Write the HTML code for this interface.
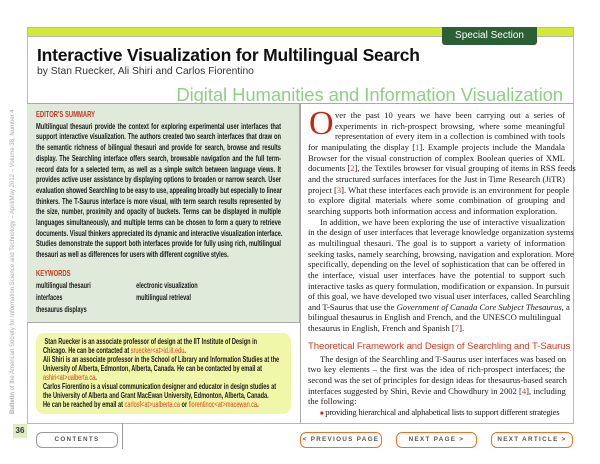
<!DOCTYPE html>
<html><head><meta charset="utf-8"><style>
*{margin:0;padding:0;box-sizing:border-box}
body{width:600px;height:464px;background:#fff;position:relative;overflow:hidden;font-family:"Liberation Sans",sans-serif}
.abs{position:absolute}
.frame{left:27px;top:27px;width:547px;height:397px;border:1px solid #b8b8b8}
.bar{left:27px;top:27px;width:547px;height:10px;background:#d4e836;border:1px solid #b8b8b8}
.tab{left:442px;top:27px;width:95px;height:18px;background:#2b6035;color:#fff;font-size:10px;text-align:center;line-height:17px;border-radius:0 0 3px 3px}
.title{left:37px;top:45px;font-size:17.5px;font-weight:bold;color:#111;letter-spacing:-0.2px}
.by{left:37px;top:66px;font-size:10.3px;color:#333}
.dh{right:37px;top:84px;font-size:18.5px;color:#8fcf85;letter-spacing:-0.1px}
.hl{left:27px;top:103px;width:547px;height:1px;background:#aaa}
.panel{left:27px;top:103px;width:273px;height:220px;background:#dfeadb;border-right:1px solid #aaa;border-bottom:1px solid #aaa}
.vdiv{left:300px;top:103px;width:1px;height:321px;background:#aaa}
.sq{transform-origin:0 0;transform:scaleX(0.7);white-space:nowrap}
.sum{left:36px;top:109px;width:350px;font-size:8.2px;line-height:10.7px;color:#1a1a1a;font-weight:bold}
.sum div{text-align:justify;text-align-last:justify}
.red{color:#c8371f}
.lab{font-size:8.4px;font-weight:bold}
.kw{font-size:8px;color:#1a1a1a;line-height:12px;font-weight:bold}
.bio{left:36px;top:333px;width:255px;height:81px;background:#f1f7a8;border-radius:8px}
.biot{left:43px;top:338px;width:352px;font-size:8px;line-height:8.7px;color:#1a1a1a;font-weight:bold}
.biot .r{color:#e2401e;font-weight:normal}
.col{left:308px;top:110px;width:257px;font-family:"Liberation Serif",serif;font-size:8.6px;line-height:10.65px;color:#1a1a1a}
.col div{text-align:justify;text-align-last:justify;white-space:nowrap}
.col .nl{text-align-last:left}
.col .r{color:#d83a2a}
.drop{left:309px;top:107px;font-family:"Liberation Serif",serif;font-size:34px;color:#c8250f;line-height:34px}
.h2{left:308px;top:341px;font-size:9.6px;color:#d43a1f;white-space:nowrap;letter-spacing:-0.1px}
.vt{left:10px;top:414px;transform-origin:0 0;transform:rotate(-90deg);font-size:6px;color:#aaa;white-space:nowrap;width:310px}
.pn{left:13px;top:424px;width:14px;height:14px;background:#e0ecbf;font-size:8px;font-weight:bold;text-align:center;line-height:14px;color:#333}
.vl{left:122px;top:423px;width:1px;height:26px;background:#999}
.btn{height:16px;border-radius:6px;font-size:6.3px;font-weight:bold;letter-spacing:1.3px;text-align:center;line-height:13px;color:#555;white-space:nowrap}
.g{border:1.5px solid #999}
.o{border:1.5px solid #f07020}
</style></head><body>
<div class="abs frame"></div>
<div class="abs bar"></div>
<div class="abs tab">Special Section</div>
<div class="abs title">Interactive Visualization for Multilingual Search</div>
<div class="abs by">by Stan Ruecker, Ali Shiri and Carlos Fiorentino</div>
<div class="abs dh">Digital Humanities and Information Visualization</div>
<div class="abs panel"></div>
<div class="abs hl"></div>
<div class="abs vdiv"></div>
<div class="abs sum sq">
<div class="red lab" style="text-align-last:left;margin-bottom:2px">EDITOR'S SUMMARY</div>
<div>Multilingual thesauri provide the context for exploring experimental user interfaces that</div>
<div>support interactive visualization. The authors created two search interfaces that draw on</div>
<div>the semantic richness of bilingual thesauri and provide for search, browse and results</div>
<div>display. The Searchling interface offers search, browsable navigation and the full term-</div>
<div>record data for a selected term, as well as a simple switch between language views. It</div>
<div>provides active user assistance by displaying options to broaden or narrow search. User</div>
<div>evaluation showed Searchling to be easy to use, appealing broadly but especially to linear</div>
<div>thinkers. The T-Saurus interface is more visual, with term search results represented by</div>
<div>the size, number, proximity and opacity of buckets. Terms can be displayed in multiple</div>
<div>languages simultaneously, and multiple terms can be chosen to form a query to retrieve</div>
<div>documents. Visual thinkers appreciated its dynamic and interactive visualization interface.</div>
<div>Studies demonstrate the support both interfaces provide for fully using rich, multilingual</div>
<div style="text-align-last:left">thesauri as well as differences for users with different cognitive styles.</div>
<div class="red lab" style="text-align-last:left;margin-top:7px;margin-bottom:1px">KEYWORDS</div>
<div class="kw" style="text-align-last:left">multilingual thesauri<span style="position:absolute;left:143px">electronic visualization</span></div>
<div class="kw" style="text-align-last:left">interfaces<span style="position:absolute;left:143px">multilingual retrieval</span></div>
<div class="kw" style="text-align-last:left">thesaurus displays</div>
</div>
<div class="abs bio"></div>
<div class="abs biot sq">
<div>&nbsp;Stan Ruecker is an associate professor of design at the IIT Institute of Design in</div>
<div>Chicago. He can be contacted at <span class="r">sruecker&lt;at&gt;id.iit.edu</span>.</div>
<div style="margin-top:0.8px">Ali Shiri is an associate professor in the School of Library and Information Studies at the</div>
<div>University of Alberta, Edmonton, Alberta, Canada. He can be contacted by email at</div>
<div><span class="r">ashiri&lt;at&gt;ualberta.ca</span>.</div>
<div style="margin-top:0.8px">Carlos Fiorentino is a visual communication designer and educator in design studies at</div>
<div>the University of Alberta and Grant MacEwan University, Edmonton, Alberta, Canada.</div>
<div>He can be reached by email at <span class="r">carlosf&lt;at&gt;ualberta.ca</span> or <span class="r">fiorentinoc&lt;at&gt;macewan.ca</span>.</div>
</div>
<div class="abs drop">O</div>
<div class="abs col">
<div style="margin-left:27px">ver the past 10 years we have been carrying out a series of</div>
<div style="margin-left:27px">experiments in rich-prospect browsing, where some meaningful</div>
<div style="margin-left:27px">representation of every item in a collection is combined with tools</div>
<div>for manipulating the display [<span class="r">1</span>]. Example projects include the Mandala</div>
<div>Browser for the visual construction of complex Boolean queries of XML</div>
<div>documents [<span class="r">2</span>], the Textiles browser for visual grouping of items in RSS feeds</div>
<div>and the structured surfaces interfaces for the Just in Time Research (JiTR)</div>
<div>project [<span class="r">3</span>]. What these interfaces each provide is an environment for people</div>
<div>to explore digital materials where some combination of grouping and</div>
<div class="nl">searching supports both information access and information exploration.</div>
<div style="text-indent:12px">In addition, we have been exploring the use of interactive visualization</div>
<div>in the design of user interfaces that leverage knowledge organization systems</div>
<div>as multilingual thesauri. The goal is to support a variety of information</div>
<div>seeking tasks, namely searching, browsing, navigation and exploration. More</div>
<div>specifically, depending on the level of sophistication that can be offered in</div>
<div>the interface, visual user interfaces have the potential to support such</div>
<div>interactive tasks as query formulation, modification or expansion. In pursuit</div>
<div>of this goal, we have developed two visual user interfaces, called Searchling</div>
<div>and T-Saurus that use the <i>Government of Canada Core Subject Thesaurus</i>, a</div>
<div class="nl">bilingual thesaurus in English and French, and the UNESCO multilingual</div>
<div class="nl">thesaurus in English, French and Spanish [<span class="r">7</span>].</div>
<div style="height:20px"></div>
<div style="text-indent:12px">The design of the Searchling and T-Saurus user interfaces was based on</div>
<div>two key elements – the first was the idea of rich-prospect interfaces; the</div>
<div>second was the set of principles for design ideas for thesaurus-based search</div>
<div class="nl">interfaces suggested by Shiri, Revie and Chowdhury in 2002 [<span class="r">4</span>], including</div>
<div class="nl">the following:</div>
<div style="margin-left:12px;text-align-last:left;letter-spacing:-0.25px"><span style="color:#c8250f;font-size:6px">■</span> providing hierarchical and alphabetical lists to support different strategies</div>
</div>
<div class="abs h2">Theoretical Framework and Design of Searchling and T-Saurus</div>
<div class="abs vt"><b>Bulletin</b> of the American Society for Information Science and Technology – April/May 2012 – Volume 38, Number 4</div>
<div class="abs pn">36</div>
<div class="abs vl"></div>
<div class="abs btn g" style="left:36px;top:432px;width:82px">CONTENTS</div>
<div class="abs btn o" style="left:300px;top:432px;width:82px">&lt; PREVIOUS PAGE</div>
<div class="abs btn o" style="left:396px;top:432px;width:81px">NEXT PAGE &gt;</div>
<div class="abs btn o" style="left:491px;top:432px;width:82px">NEXT ARTICLE &gt;</div>
</body></html>
